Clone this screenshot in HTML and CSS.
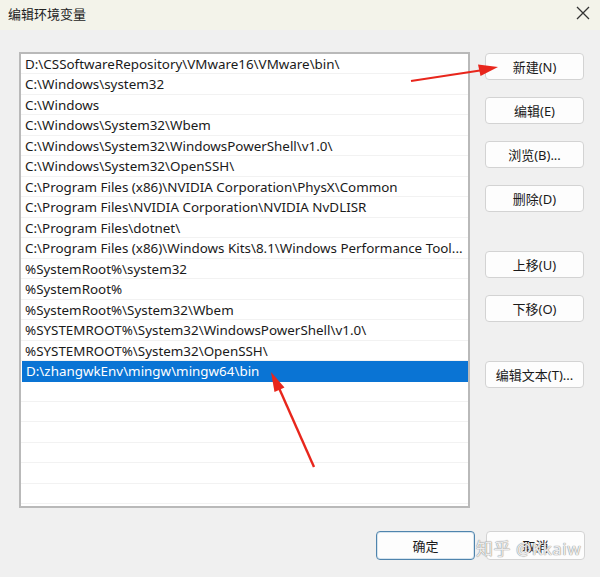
FILE: index.html
```html
<!DOCTYPE html>
<html lang="zh-CN">
<head>
    <meta charset="UTF-8">
    <meta name="viewport" content="width=device-width, initial-scale=1.0">
    <title>编辑环境变量</title>
    <link rel="stylesheet" href="styles.css">
</head>
<body>
    <div class="dialog">
        <div class="titlebar">
            <span class="title">编辑环境变量</span>
            <svg class="close" width="14" height="14" viewBox="0 0 14 14">
                <path d="M1 1 L13 13 M13 1 L1 13" stroke="#333" stroke-width="1.3" fill="none"/>
            </svg>
        </div>

        <div class="content">
            <div class="list">
                <div class="row">D:\CSSoftwareRepository\VMware16\VMware\bin\</div>
                <div class="row">C:\Windows\system32</div>
                <div class="row">C:\Windows</div>
                <div class="row">C:\Windows\System32\Wbem</div>
                <div class="row">C:\Windows\System32\WindowsPowerShell\v1.0\</div>
                <div class="row">C:\Windows\System32\OpenSSH\</div>
                <div class="row">C:\Program Files (x86)\NVIDIA Corporation\PhysX\Common</div>
                <div class="row">C:\Program Files\NVIDIA Corporation\NVIDIA NvDLISR</div>
                <div class="row">C:\Program Files\dotnet\</div>
                <div class="row">C:\Program Files (x86)\Windows Kits\8.1\Windows Performance Tool...</div>
                <div class="row">%SystemRoot%\system32</div>
                <div class="row">%SystemRoot%</div>
                <div class="row">%SystemRoot%\System32\Wbem</div>
                <div class="row">%SYSTEMROOT%\System32\WindowsPowerShell\v1.0\</div>
                <div class="row">%SYSTEMROOT%\System32\OpenSSH\</div>
                <div class="row selected">D:\zhangwkEnv\mingw\mingw64\bin</div>
                <div class="row"></div>
                <div class="row"></div>
                <div class="row"></div>
                <div class="row"></div>
                <div class="row"></div>
                <div class="row last"></div>
            </div>

            <div class="side">
                <button class="btn">新建(N)</button>
                <button class="btn">编辑(E)</button>
                <button class="btn">浏览(B)...</button>
                <button class="btn">删除(D)</button>
                <button class="btn group">上移(U)</button>
                <button class="btn">下移(O)</button>
                <button class="btn group">编辑文本(T)...</button>
            </div>
        </div>

        <div class="footer">
            <button class="btn default">确定</button>
            <button class="btn">取消</button>
        </div>

        <!-- 红色箭头标注 -->
        <svg class="marks" width="600" height="577" viewBox="0 0 600 577">
            <path d="M411 81 L480 70.5" stroke="#e8261c" stroke-width="2.2" fill="none"/>
            <path d="M498 67 L478 64.5 L480.5 76 Z" fill="#e8261c"/>
            <path d="M314 467 L279 388" stroke="#e8261c" stroke-width="2.4" fill="none"/>
            <path d="M271 372 L274.5 392 L284.5 387.5 Z" fill="#e8261c"/>
        </svg>

        <div class="watermark">知乎 @Kkaiw</div>
    </div>
</body>
</html>
```

FILE: styles.css
```css
body {
    margin: 0;
    font-family: "Noto Sans", "Noto Sans CJK SC", sans-serif;
    font-size: 13px;
    color: #1a1a1a;
    background: #f0f0f0;
}
.dialog {
    position: relative;
    width: 600px;
    height: 577px;
    background: #f0f0f0;
    overflow: hidden;
}
.titlebar {
    height: 30px;
    background: #f3f3ea;
    display: flex;
    align-items: center;
    justify-content: space-between;
    padding: 0 10px 0 8px;
}
.title {
    font-size: 13px;
    color: #222;
    margin-top: -3px;
}
.close {
    margin-top: -4px;
}
.content {
    display: flex;
    padding: 22px 0 0 19px;
}
.list {
    width: 447px;
    height: 452px;
    border: 2px solid #b9b9b9;
    background: #fff;
    overflow: hidden;
}
.row {
    height: 20.47px;
    line-height: 20px;
    padding-left: 4px;
    box-sizing: border-box;
    border-bottom: 1px solid #f2f2f2;
    font-size: 13.4px;
    white-space: nowrap;
    overflow: hidden;
}
.row.selected {
    background: #0a74d4;
    color: #fff;
    border-bottom-color: #0a74d4;
    margin: 0 0 0 1px;
}
.side {
    display: flex;
    flex-direction: column;
    margin: 1px 0 0 15px;
}
.btn {
    width: 99px;
    height: 27px;
    margin-bottom: 17px;
    background: #fdfdfd;
    border: 1px solid #d3d3d3;
    border-radius: 4px;
    font-family: "Noto Sans", "Noto Sans CJK SC", sans-serif;
    font-size: 13px;
    color: #1a1a1a;
    padding: 0;
}
.btn.group {
    margin-top: 22px;
}
.footer {
    display: flex;
    justify-content: flex-end;
    gap: 11px;
    padding: 23px 15px 0 0;
}
.footer .btn {
    height: 29px;
    margin: 0;
}
.btn.default {
    border: 1px solid #4f84ad;
    box-shadow: inset 0 0 0 1px #d6e4ee;
}
.marks {
    position: absolute;
    left: 0;
    top: 0;
    pointer-events: none;
}
.watermark {
    position: absolute;
    left: 476px;
    top: 535px;
    font-size: 17px;
    color: rgba(255, 255, 255, 0.85);
    text-shadow: 0 0 1px #888, 0 0 1px #888;
    letter-spacing: 0.5px;
}
```
